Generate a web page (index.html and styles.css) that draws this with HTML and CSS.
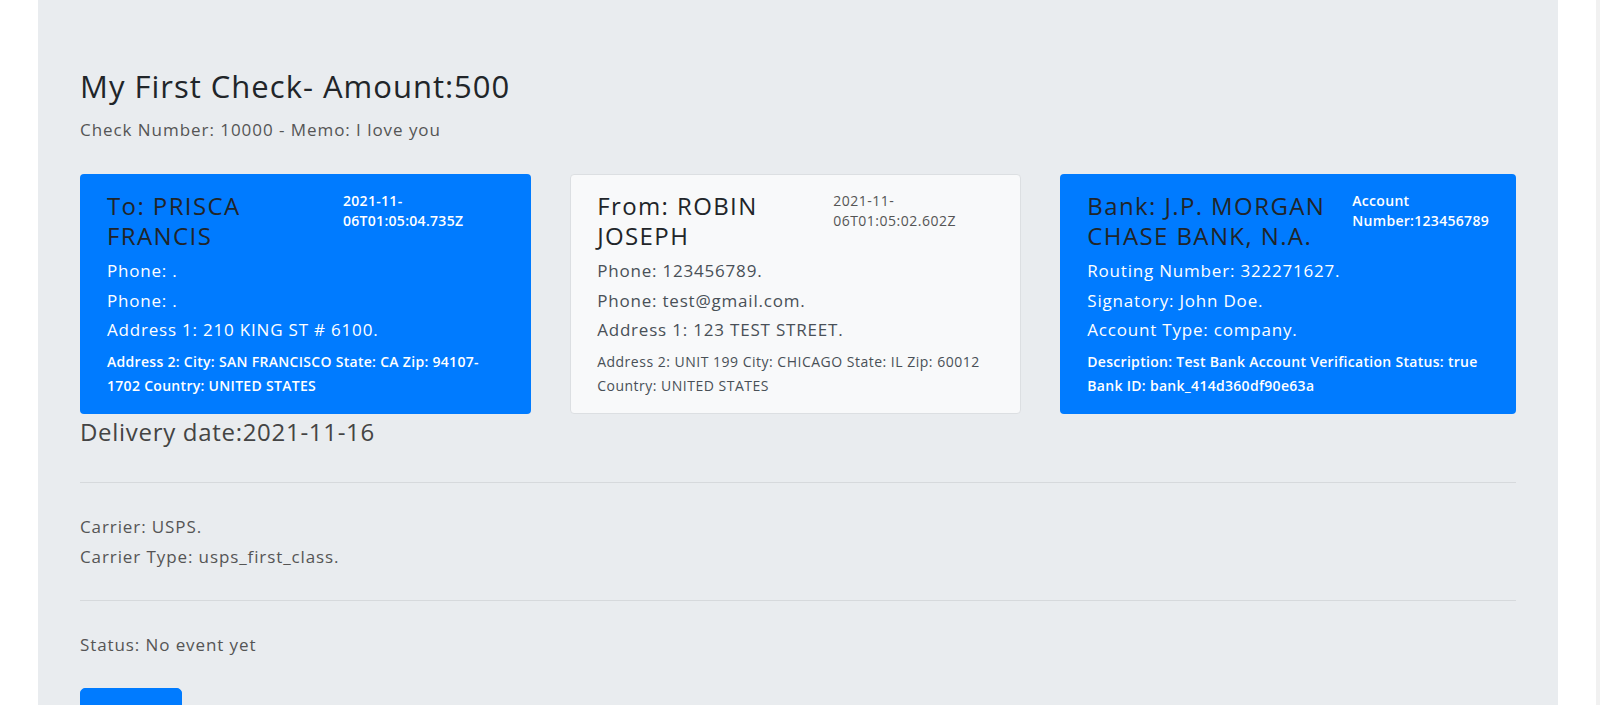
FILE: index.html
```html
<!DOCTYPE html>
<html lang="en">
<head>
<meta charset="utf-8">
<title>My First Check</title>
<link rel="stylesheet" href="styles.css">
</head>
<body>
<div class="page">
  <main class="jumbo">
    <h2 class="title">My First Check- Amount:500</h2>
    <p class="subtitle">Check Number: 10000 - Memo: I love you</p>

    <div class="cards">
      <section class="card card-blue">
        <div class="card-top">
          <h4 class="card-name">To: PRISCA FRANCIS</h4>
          <div class="card-meta meta-strong">2021-11-<br>06T01:05:04.735Z</div>
        </div>
        <p class="line">Phone: .</p>
        <p class="line">Phone: .</p>
        <p class="line">Address 1: 210 KING ST # 6100.</p>
        <p class="small">Address 2: City: SAN FRANCISCO State: CA Zip: 94107-<wbr>1702 Country: UNITED STATES</p>
      </section>

      <section class="card card-light">
        <div class="card-top">
          <h4 class="card-name">From: ROBIN JOSEPH</h4>
          <div class="card-meta">2021-11-<br>06T01:05:02.602Z</div>
        </div>
        <p class="line">Phone: 123456789.</p>
        <p class="line">Phone: test@gmail.com.</p>
        <p class="line">Address 1: 123 TEST STREET.</p>
        <p class="small">Address 2: UNIT 199 City: CHICAGO State: IL Zip: 60012 Country: UNITED STATES</p>
      </section>

      <section class="card card-blue">
        <div class="card-top card-top-wide">
          <h4 class="card-name">Bank: J.P. MORGAN CHASE BANK, N.A.</h4>
          <div class="card-meta meta-strong">Account Number:123456789</div>
        </div>
        <p class="line">Routing Number: 322271627.</p>
        <p class="line">Signatory: John Doe.</p>
        <p class="line">Account Type: company.</p>
        <p class="small">Description: Test Bank Account Verification Status: true Bank ID: bank_414d360df90e63a</p>
      </section>
    </div>

    <h4 class="delivery">Delivery date:2021-11-16</h4>
    <hr class="rule rule-first">
    <p class="info">Carrier: USPS.</p>
    <p class="info">Carrier Type: usps_first_class.</p>
    <hr class="rule">
    <p class="info">Status: No event yet</p>
    <button class="btn" type="button">Back</button>
  </main>
  <div class="scroll-edge"></div>
</div>
</body>
</html>
```

FILE: styles.css
```css
html, body {
  margin: 0;
  padding: 0;
  background: #ffffff;
}

body {
  font-family: "Open Sans", "Liberation Sans", sans-serif;
  color: #212529;
}

.page {
  display: flex;
  align-items: stretch;
  min-height: 705px;
}

.jumbo {
  margin-left: 38px;
  width: 1520px;
  box-sizing: border-box;
  background: #e9ecef;
  padding: 67px 42px 40px 42px;
}

.scroll-edge {
  margin-left: auto;
  width: 4px;
  background: #f1f1f1;
}

.title {
  margin: 0;
  font-size: 31px;
  font-weight: 400;
  line-height: 38.4px;
  letter-spacing: 1px;
  color: #212529;
}

.subtitle {
  margin: 13px 0 0 0;
  font-size: 17px;
  line-height: 24px;
  letter-spacing: 0.95px;
  color: #555;
}

.cards {
  margin-top: 32px;
  display: grid;
  grid-template-columns: repeat(3, 1fr);
  column-gap: 39px;
}

.card {
  box-sizing: border-box;
  border-radius: 4px;
  border: 1px solid transparent;
  padding: 16px 26px 15px 26px;
}

.card-blue {
  background: #007bff;
  color: #ffffff;
}

.card-light {
  background: #f8f9fa;
  border-color: #dcdfe2;
  color: #495057;
}

.card-top {
  display: grid;
  grid-template-columns: 236px 1fr;
  margin-bottom: 8px;
}

.card-top-wide {
  grid-template-columns: 265px 1fr;
}

.card-name {
  margin: 0;
  padding-right: 12px;
  font-size: 24px;
  font-weight: 400;
  line-height: 29.5px;
  letter-spacing: 1.4px;
  color: #212529;
}

.card-meta {
  font-size: 14px;
  line-height: 19.5px;
  letter-spacing: 0.5px;
  color: #555;
}

.meta-strong {
  color: #ffffff;
  font-weight: 600;
  letter-spacing: 0.3px;
}

.line {
  margin: 0 0 4px 0;
  font-size: 17px;
  line-height: 25.5px;
  letter-spacing: 0.8px;
}

.small {
  margin: 7px 0 0 0;
  font-size: 14px;
  line-height: 24px;
  letter-spacing: 0.5px;
}

.card-blue .small {
  font-weight: 600;
  letter-spacing: 0.3px;
}

.delivery {
  margin: 4px 0 0 0;
  font-size: 24px;
  font-weight: 400;
  line-height: 28.8px;
  letter-spacing: 0.7px;
  color: #444;
}

.rule {
  border: 0;
  border-top: 1px solid #d6d9dc;
  margin: 31px 0;
}

.rule-first {
  margin-top: 35px;
}

.info {
  margin: 0 0 4.5px 0;
  font-size: 17px;
  line-height: 25.5px;
  letter-spacing: 0.9px;
  color: #555;
}

.btn {
  margin-top: 30px;
  display: block;
  width: 102px;
  border: 1px solid #007bff;
  border-radius: 5px;
  background: #007bff;
  color: #ffffff;
  font-family: inherit;
  font-size: 16px;
  line-height: 24px;
  padding: 22px 12px 16px 12px;
}
```
